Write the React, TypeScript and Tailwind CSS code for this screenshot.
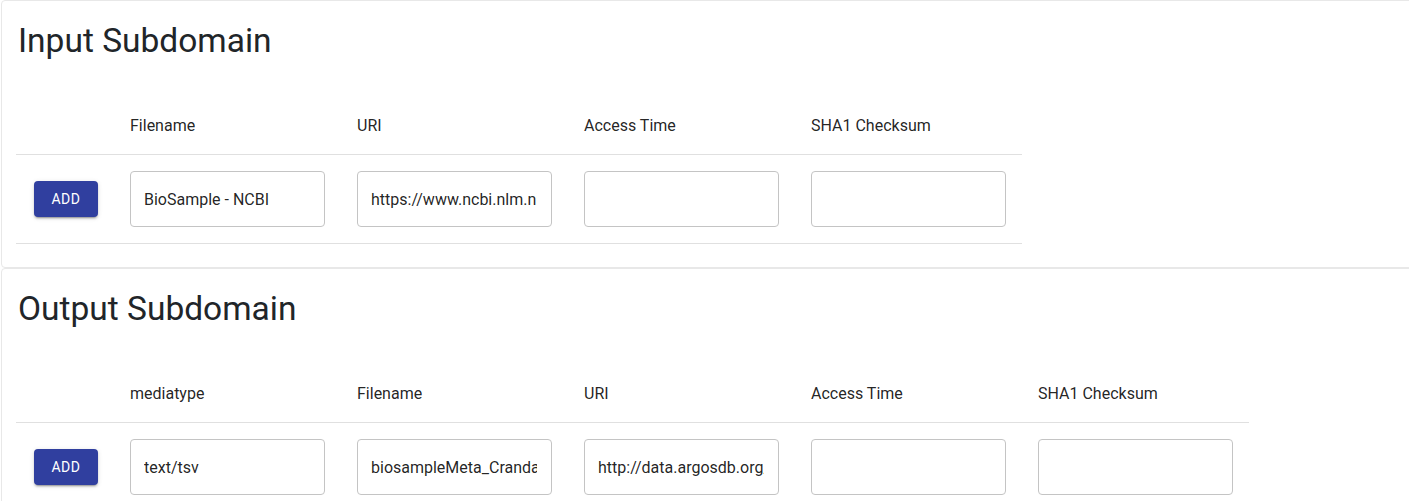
import { useState } from "react"

interface Section {
  title: string
  columns: string[]
  values: string[]
}

const sections: Section[] = [
  {
    title: "Input Subdomain",
    columns: ["Filename", "URI", "Access Time", "SHA1 Checksum"],
    values: ["BioSample - NCBI", "https://www.ncbi.nlm.nih.gov/biosample/", "", ""],
  },
  {
    title: "Output Subdomain",
    columns: ["mediatype", "Filename", "URI", "Access Time", "SHA1 Checksum"],
    values: ["text/tsv", "biosampleMeta_Crandall_2020.tsv", "http://data.argosdb.org/ln2data/", "", ""],
  },
]

const SubdomainCard = ({ section }: { section: Section }) => {
  const [values, setValues] = useState(section.values)

  return (
    <div className="ml-px w-[1420px] rounded-[4px] border border-[#e8e8e8] bg-white px-[14px] pt-[19px] pb-[23px]">
      <h4 className="pl-[2px] text-[33.5px] leading-[42px] font-normal text-[#212529]">{section.title}</h4>
      <table className="mt-[36px] border-collapse text-[16px] text-[rgba(0,0,0,0.87)]">
        <thead>
          <tr className="border-b border-[#e0e0e0]">
            <th className="w-[98px] p-0"></th>
            {section.columns.map((col) => (
              <th key={col} className="p-4 text-left font-normal leading-6">
                {col}
              </th>
            ))}
          </tr>
        </thead>
        <tbody>
          <tr className="border-b border-[#e0e0e0]">
            <td className="w-[98px] py-4 pl-[2px] text-center">
              <button className="h-[36px] w-[64px] rounded-[4px] bg-[#303f9f] text-[14px] font-normal tracking-[0.5px] text-white shadow-[0_3px_1px_-2px_rgba(0,0,0,0.2),0_2px_2px_0_rgba(0,0,0,0.14),0_1px_5px_0_rgba(0,0,0,0.12)]">
                ADD
              </button>
            </td>
            {section.columns.map((col, i) => (
              <td key={col} className="p-4">
                <input
                  value={values[i]}
                  onChange={(e) => setValues(values.map((v, j) => (j === i ? e.target.value : v)))}
                  className="block h-[56px] w-[195px] rounded-[4px] border border-[#c4c4c4] pr-[14px] pl-[13px] text-[16px] text-[rgba(0,0,0,0.87)] outline-none"
                />
              </td>
            ))}
          </tr>
        </tbody>
      </table>
    </div>
  )
}

export default function App() {
  return (
    <div className="h-[501px] w-full overflow-hidden bg-white" style={{ fontFamily: "Roboto, 'Liberation Sans', sans-serif" }}>
      {sections.map((s) => (
        <SubdomainCard key={s.title} section={s} />
      ))}
    </div>
  )
}
